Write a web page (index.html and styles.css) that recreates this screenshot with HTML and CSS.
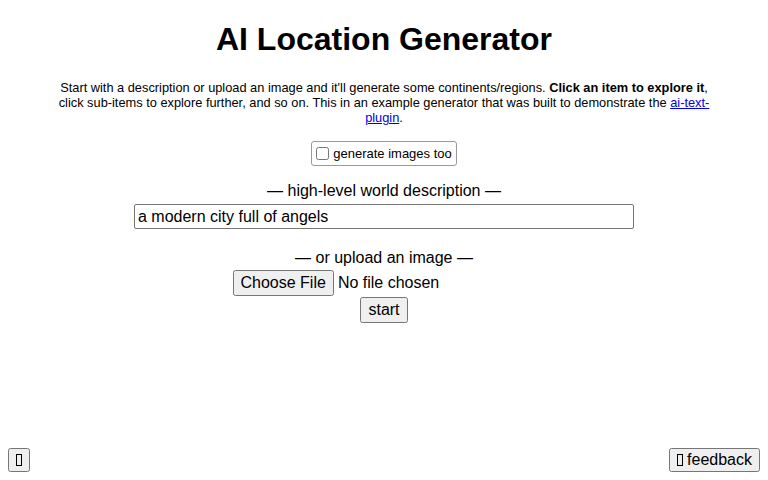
FILE: index.html
```html
<!DOCTYPE html>
<html lang="en">
<head>
    <meta charset="UTF-8">
    <meta name="viewport" content="width=device-width, initial-scale=1.0">
    <title>AI Location Generator</title>
    <link rel="stylesheet" href="styles.css">
</head>
<body>
    <h1>AI Location Generator</h1>
    <p class="intro">Start with a description or upload an image and it'll generate some continents/regions. <b>Click an item to explore it</b>, click sub-items to explore further, and so on. This in an example generator that was built to demonstrate the <a href="#">ai-text-plugin</a>.</p>

    <label class="images-toggle"><input type="checkbox" id="genImages"> generate images too</label>

    <div class="section-label">— high-level world description —</div>
    <input type="text" id="worldDesc" class="world-input" value="a modern city full of angels">

    <div class="section-label upload-label">— or upload an image —</div>
    <input type="file" id="worldImage" class="file-input">
    <button class="start-button">start</button>

    <button class="corner-button left-corner"><span class="missing-glyph"></span></button>
    <button class="corner-button right-corner"><span class="missing-glyph"></span> feedback</button>
</body>
</html>
```

FILE: styles.css
```css
body {
    display: flex;
    flex-direction: column;
    align-items: center;
    margin: 0;
    padding: 0 8px;
    font-family: "Liberation Sans", Arial, sans-serif;
    font-size: 16px;
    color: #000;
    background-color: #fff;
}
h1 {
    font-size: 32px;
    margin: 21px 0 0;
    line-height: 37px;
}
.intro {
    max-width: 660px;
    margin: 22px 0 0;
    font-size: 12.8px;
    line-height: 15px;
    text-align: center;
}
.intro a {
    color: #0000ee;
}
.images-toggle {
    display: flex;
    align-items: center;
    margin-top: 16px;
    padding: 4px 4px 4px 3px;
    border: 1px solid #999;
    border-radius: 3px;
    font-size: 13px;
}
.images-toggle input {
    margin: 0 4px 0 1px;
    width: 13px;
    height: 13px;
}
.section-label {
    margin-top: 16px;
    line-height: 18px;
}
.upload-label {
    margin-top: 20px;
}
.world-input {
    width: 500px;
    height: 25px;
    box-sizing: border-box;
    margin-top: 4px;
    padding: 1px 3px;
    font-family: inherit;
    font-size: 16px;
    border: 1px solid #767676;
    border-radius: 2px;
}
.file-input {
    margin-top: 3px;
    font-family: inherit;
    font-size: 16px;
}
button {
    font-family: inherit;
    font-size: 16px;
}
.file-input::file-selector-button {
    padding: 2px 6px;
}
.start-button {
    margin-top: 1px;
    padding: 2px 6px;
}
.corner-button {
    position: fixed;
    bottom: 8px;
    height: 24px;
    padding: 1px 6px;
    display: flex;
    align-items: center;
    gap: 4px;
}
.left-corner {
    left: 8px;
}
.right-corner {
    right: 8px;
}
.missing-glyph {
    display: inline-block;
    width: 4px;
    height: 10px;
    border: 1px solid #000;
}
```
